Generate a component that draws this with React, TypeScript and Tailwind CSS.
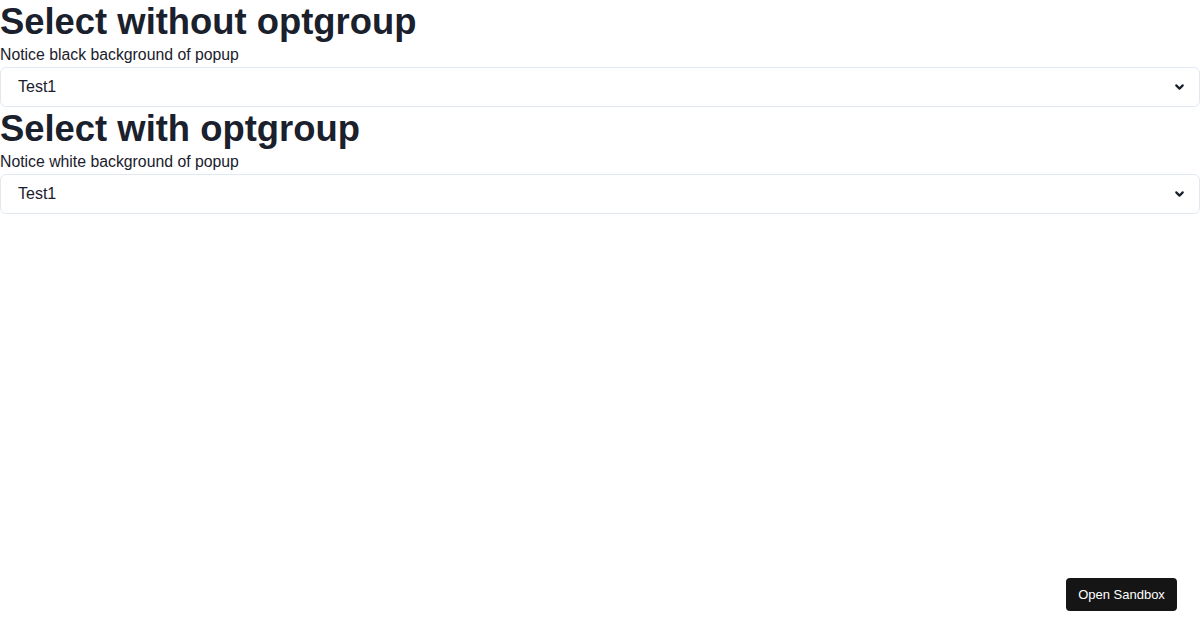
import React from "react";

const Chevron = () => (
  <svg className="pointer-events-none absolute right-[13px] top-1/2 -translate-y-1/2" width="13" height="13" viewBox="0 0 24 24" fill="none" stroke="#1a202c" strokeWidth="4" strokeLinecap="round" strokeLinejoin="round">
    <path d="M6 9l6 6 6-6" />
  </svg>
);

const FakeSelect = ({ value }: { value: string }) => (
  <div className="relative flex h-[40px] w-full items-center rounded-md border border-[#e2e8f0] bg-white pl-[17px] text-[16px] text-[#1a202c]">
    {value}
    <Chevron />
  </div>
);

export default function App() {
  return (
    <div className="relative h-[630px] w-[1200px] bg-white font-['Liberation_Sans',Arial,sans-serif] text-[#1a202c]">
      <h1 className="text-[36.4px] font-bold leading-[43px]">Select without optgroup</h1>
      <p className="mb-[1px] text-[15.8px] leading-[23px]">Notice black background of popup</p>
      <FakeSelect value="Test1" />
      <h1 className="text-[36.4px] font-bold leading-[43px]">Select with optgroup</h1>
      <p className="mb-[1px] text-[15.8px] leading-[23px]">Notice white background of popup</p>
      <FakeSelect value="Test1" />
      <button className="absolute bottom-[19px] right-[23px] flex h-[33px] w-[111px] items-center justify-center rounded-[4px] bg-[#151515] text-[13px] text-white">
        Open Sandbox
      </button>
    </div>
  );
}
